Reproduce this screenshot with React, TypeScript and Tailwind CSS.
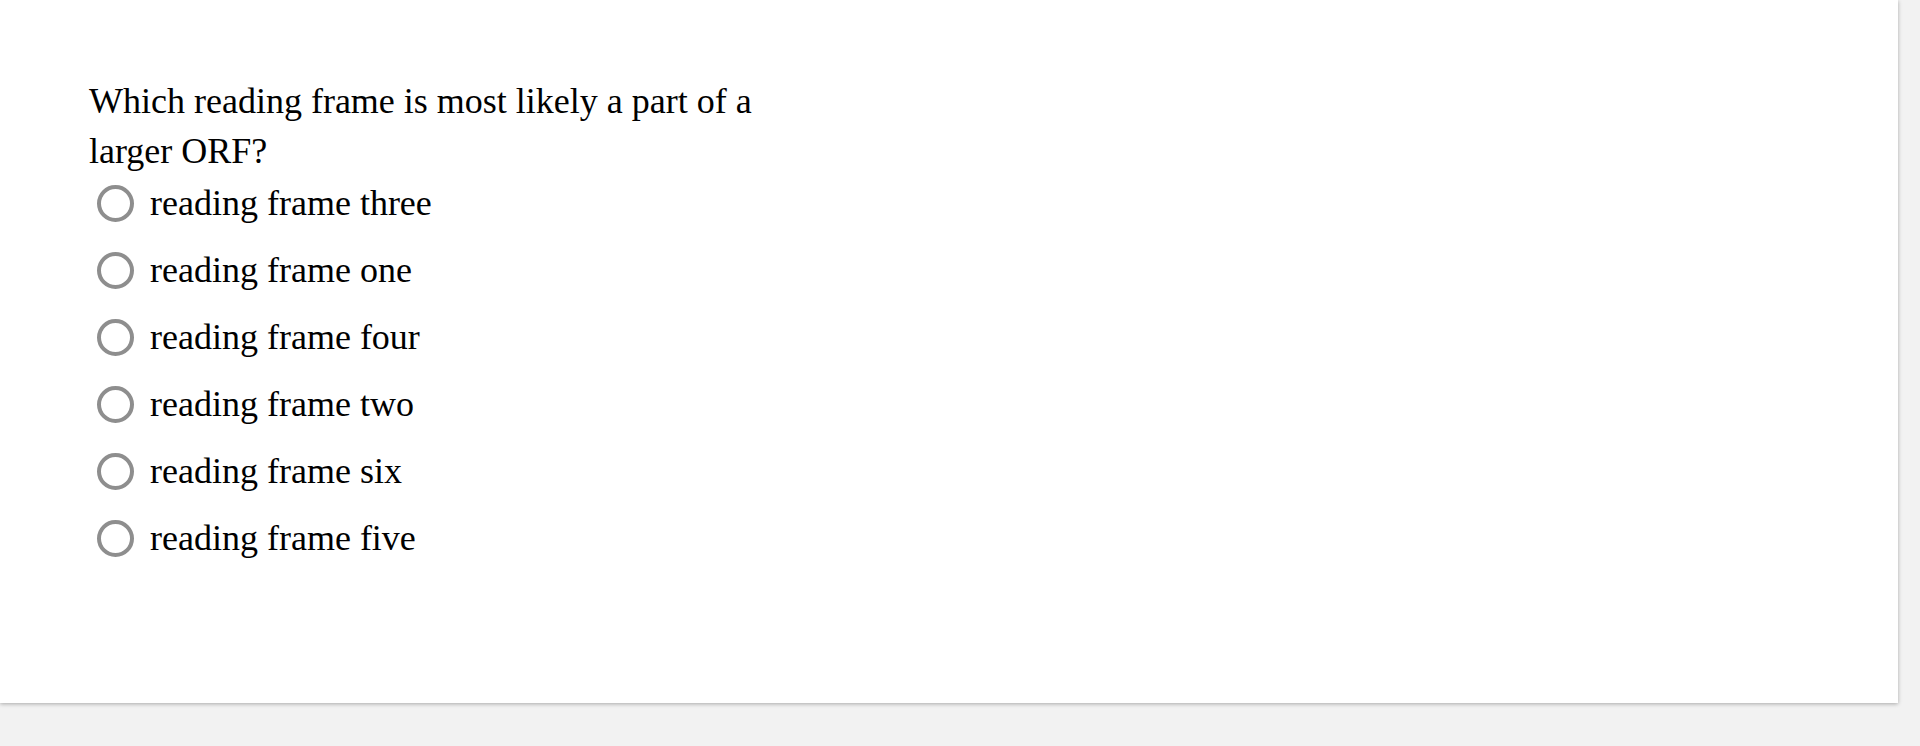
const options = [
  "reading frame three",
  "reading frame one",
  "reading frame four",
  "reading frame two",
  "reading frame six",
  "reading frame five",
];

export default function App() {
  return (
    <div className="h-[746px] w-[1920px] overflow-hidden bg-[#f2f2f2]">
      <div
        className="h-[703px] w-[1898px] bg-white pl-[89px] pt-[76px] text-black shadow-[0_1px_4px_rgba(0,0,0,0.3)]"
        style={{ fontFamily: '"Liberation Serif", "Times New Roman", serif' }}
      >
        <p className="mb-[2px] w-[690px] text-[36px] leading-[50px]">
          Which reading frame is most likely a part of a larger ORF?
        </p>
        <div className="flex flex-col gap-[17px]">
          {options.map((label) => (
            <label key={label} className="flex h-[50px] items-center">
              <span className="ml-[8px] mr-[16px] h-[37px] w-[37px] shrink-0 rounded-full border-[4px] border-[#8e8e8e] bg-white" />
              <span className="text-[36px] leading-[50px]">{label}</span>
            </label>
          ))}
        </div>
      </div>
    </div>
  );
}
